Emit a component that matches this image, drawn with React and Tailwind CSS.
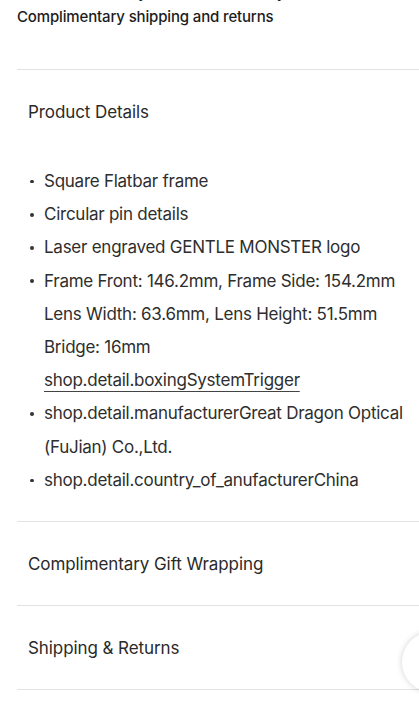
const DETAILS = [
  { lines: ['Square Flatbar frame'] },
  { lines: ['Circular pin details'] },
  { lines: ['Laser engraved GENTLE MONSTER logo'] },
  {
    lines: [
      'Frame Front: 146.2mm, Frame Side: 154.2mm',
      'Lens Width: 63.6mm, Lens Height: 51.5mm',
      'Bridge: 16mm',
    ],
    link: 'shop.detail.boxingSystemTrigger',
  },
  { lines: ['shop.detail.manufacturerGreat Dragon Optical', '(FuJian) Co.,Ltd.'] },
  { lines: ['shop.detail.country_of_anufacturerChina'] },
];

function Section({ title, children }) {
  return (
    <div className="border-t border-[#e3e3e3]">
      <div className="h-[83px] pt-[3px] flex items-center pl-[11px] text-[17px] text-[#2a2a2a] tracking-[-0.005em]">{title}</div>
      {children}
    </div>
  );
}

export default function App() {
  return (
    <div className="relative w-[419px] h-[712px] overflow-hidden bg-white font-['Inter',sans-serif]">
      <div className="pl-[17px]">
        <div className="-mt-[19px] pb-[40px] text-[15px] leading-[24px] font-medium text-[#1c1c1c] tracking-[-0.01em]">
          <p>Estimated delivery in 1-3 business days</p>
          <p>Complimentary shipping and returns</p>
        </div>

        <Section title="Product Details">
          <ul className="mt-[12px] pb-[24px] pl-[13px] text-[17px] leading-[33.2px] text-[#2e2e2e] tracking-[-0.015em]">
            {DETAILS.map((d, i) => (
              <li key={i} className="flex">
                <span className="w-[14px] shrink-0 h-[33.2px] flex items-center">
                  <span className="block w-[3.5px] h-[3.5px] rounded-full bg-[#333]" />
                </span>
                <div>
                  {d.lines.map((l, j) => (
                    <div key={j} className="whitespace-nowrap">{l}</div>
                  ))}
                  {d.link && (
                    <div>
                      <span className="underline underline-offset-[5px] decoration-[#444]">{d.link}</span>
                    </div>
                  )}
                </div>
              </li>
            ))}
          </ul>
        </Section>

        <Section title="Complimentary Gift Wrapping" />
        <Section title="Shipping & Returns" />
        <div className="border-t border-[#e3e3e3]" />
      </div>

      <div className="absolute left-[402px] top-[632px] w-[60px] h-[60px] rounded-full bg-white shadow-[0_0_6px_rgba(0,0,0,0.18)]" />
    </div>
  );
}
